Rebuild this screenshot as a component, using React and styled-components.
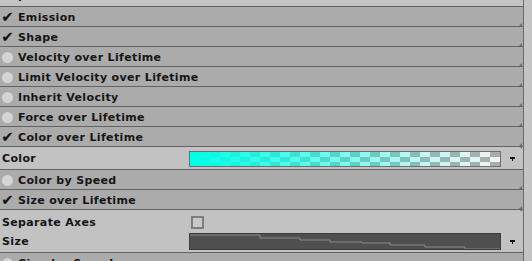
import React from "react";
import styled, { createGlobalStyle } from "styled-components";

const GlobalStyle = createGlobalStyle`
  html, body {
    margin: 0;
    padding: 0;
    background: #c2c2c2;
  }
  body {
    font-family: "DejaVu Sans", Verdana, sans-serif;
    font-size: 11px;
    font-weight: bold;
    color: #151515;
  }
`;

const Frame = styled.div`
  display: flex;
  flex-direction: row;
  width: 532px;
  height: 261px;
  overflow: hidden;
`;

const Panel = styled.div`
  display: flex;
  flex-direction: column;
  width: 523px;
  flex: none;
`;

const Scrollbar = styled.div`
  flex: none;
  width: 8px;
  border-left: 1px solid #6a6a6a;
  background: #c4c4c4;
`;

const Header = styled.div`
  position: relative;
  display: flex;
  align-items: center;
  gap: 5px;
  padding-left: 2px;
  padding-top: 1px;
  box-sizing: border-box;
  height: 20px;
  background: #ababab;
  border-bottom: 1px solid #636363;
  flex: none;

  &::after {
    content: "";
    position: absolute;
    right: 1px;
    bottom: -3px;
    border: 3px solid transparent;
    border-right: 3px solid #6a6a6a;
  }
`;

const Toggle = styled.span`
  width: 11px;
  height: 11px;
  display: flex;
  align-items: center;
  justify-content: center;
  flex: none;
  border-radius: 50%;
  background: ${(p) => (p.on ? "transparent" : "#d4d4d4")};
  font-size: 15px;
  line-height: 11px;
  color: #111;
`;

const Title = styled.span`
  letter-spacing: 0.35px;
`;

const Section = styled.div`
  display: flex;
  flex-direction: column;
  padding: ${(p) => p.pad || "0"};
  background: #c2c2c2;
  border-bottom: 1px solid #636363;
  flex: none;
`;

const Prop = styled.div`
  display: flex;
  align-items: center;
  height: ${(p) => p.h || 18}px;
  padding-left: 2px;
`;

const Label = styled.span`
  width: 187px;
  flex: none;
  letter-spacing: 0.35px;
`;

const Cut = styled.div`
  height: 6px;
  overflow: hidden;
  padding-left: 18px;
  background: #c4c4c4;
  border-bottom: 1px solid #636363;
  flex: none;
`;

const CutText = styled.div`
  line-height: 13px;
  margin-top: -11px;
`;

const Gradient = styled.div`
  width: 310px;
  height: 14px;
  border: 1px solid #6f6f6f;
  background:
    linear-gradient(to right, rgba(0, 255, 232, 1) 0%, rgba(0, 255, 232, 0.7) 30%, rgba(0, 255, 232, 0.2) 75%, rgba(0, 255, 232, 0) 100%),
    repeating-conic-gradient(#f4f4f4 0 25%, #acacac 0 50%) 0 0 / 20px 10px;
`;

const Curve = styled.div`
  width: 310px;
  height: 15px;
  border: 1px solid #3c3c3c;
  background: #4f4f4f;
  display: flex;
`;

const Arrow = styled.span`
  margin-left: 9px;
  display: flex;
`;

const Check = styled.span`
  width: 9px;
  height: 9px;
  border: 2px solid #7e7e7e;
  background: #c8c8c8;
  margin-left: 2px;
`;

const DropArrow = () => (
  <Arrow>
    <svg width="5" height="4" viewBox="0 0 5 4">
      <rect x="0" y="0" width="5" height="2" fill="#111" />
      <rect x="2" y="2" width="1" height="2" fill="#111" />
    </svg>
  </Arrow>
);

const modulesTop = [
  { name: "Emission", on: true },
  { name: "Shape", on: true },
  { name: "Velocity over Lifetime" },
  { name: "Limit Velocity over Lifetime" },
  { name: "Inherit Velocity" },
  { name: "Force over Lifetime" },
  { name: "Color over Lifetime", on: true },
];

const Module = ({ name, on }) => (
  <Header>
    <Toggle on={on}>{on ? "✔" : ""}</Toggle>
    <Title>{name}</Title>
  </Header>
);

export default function App() {
  return (
    <Frame>
      <GlobalStyle />
      <Panel>
        <Cut>
          <CutText>p</CutText>
        </Cut>
        {modulesTop.map((m) => (
          <Module key={m.name} {...m} />
        ))}
        <Section pad="1px 0 0">
          <Prop h={21}>
            <Label>Color</Label>
            <Gradient />
            <DropArrow />
          </Prop>
        </Section>
        <Module name="Color by Speed" />
        <Module name="Size over Lifetime" on />
        <Section pad="3px 0 1px">
          <Prop h={19}>
            <Label>Separate Axes</Label>
            <Check />
          </Prop>
          <Prop h={19}>
            <Label>Size</Label>
            <Curve>
              <svg width="310" height="15" viewBox="0 0 310 15">
                <polyline
                  points="0,1 70,1 70,4 110,4 110,6 140,6 140,8 172,8 172,9 200,9 200,11 235,11 235,13 275,13 275,15 310,15"
                  fill="none"
                  stroke="#8a8a8a"
                  strokeWidth="1"
                />
              </svg>
            </Curve>
            <DropArrow />
          </Prop>
        </Section>
        <Module name="Circular Speed" />
      </Panel>
      <Scrollbar />
    </Frame>
  );
}
